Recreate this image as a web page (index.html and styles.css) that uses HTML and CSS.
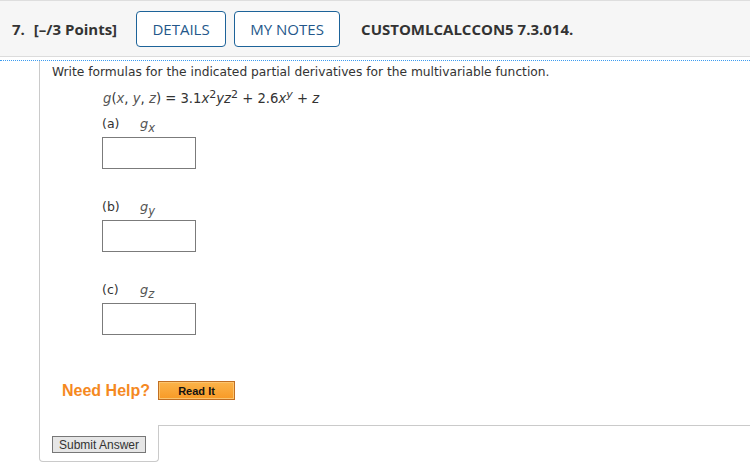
FILE: index.html
```html
<!DOCTYPE html>
<html>
<head>
<meta charset="utf-8">
<link rel="stylesheet" href="styles.css">
</head>
<body>
<header class="qhead">
  <span class="qnum">7.</span>
  <span class="qpts">[–/3 Points]</span>
  <button class="hbtn details">DETAILS</button>
  <button class="hbtn notes">MY NOTES</button>
  <span class="qid">CUSTOMLCALCCON5 7.3.014.</span>
</header>
<div class="main">
  <div class="dots"></div>
  <p class="intro">Write formulas for the indicated partial derivatives for the multivariable function.</p>
  <p class="eq"><i class="v">g</i>(<i class="v">x</i>, <i class="v">y</i>, <i class="v">z</i>) = 3.1<i>x</i><sup>2</sup><i>yz</i><sup>2</sup> + 2.6<i>x</i><sup><i>y</i></sup> + <i>z</i></p>
  <div class="part part-first">
    <div class="plabel"><span class="pl">(a)</span><span class="gv"><i>g</i><sub><i>x</i></sub></span></div>
    <div class="box"></div>
  </div>
  <div class="part">
    <div class="plabel"><span class="pl">(b)</span><span class="gv"><i>g</i><sub><i>y</i></sub></span></div>
    <div class="box"></div>
  </div>
  <div class="part part-last">
    <div class="plabel"><span class="pl">(c)</span><span class="gv"><i>g</i><sub><i>z</i></sub></span></div>
    <div class="box"></div>
  </div>
  <div class="help">
    <span class="need">Need Help?</span>
    <button class="readit">Read It</button>
  </div>
</div>
<div class="foot">
  <div class="foot-left"><button class="submit">Submit Answer</button></div>
  <div class="foot-right"></div>
</div>
</body>
</html>
```
FILE: styles.css
```css
html, body {
  margin: 0;
  padding: 0;
  background: #fff;
}
body {
  width: 750px;
  height: 467px;
  overflow: hidden;
  font-family: "DejaVu Sans", Verdana, sans-serif;
  color: #333;
}
.qhead {
  height: 55px;
  background: #f6f6f6;
  border-top: 1px solid #dedede;
  border-bottom: 1px solid #dcdcdc;
  display: flex;
  align-items: center;
  padding-left: 12px;
  font-family: "Open Sans", sans-serif;
  font-size: 15px;
  box-sizing: content-box;
}
.qnum {
  font-weight: 700;
  color: #333;
  margin-right: 9px;
}
.qpts {
  font-weight: 700;
  color: #333;
  margin-right: 19px;
}
.hbtn {
  height: 36px;
  border: 1px solid #1d6399;
  border-radius: 4px;
  background: #fff;
  color: #24578a;
  font-family: "Open Sans", sans-serif;
  font-size: 15px;
  padding: 0;
  margin: 0 8px 0 0;
}
.details { width: 90px; }
.notes { width: 106px; margin-right: 21px; }
.qid {
  font-weight: 700;
  color: #333;
}
.main {
  margin-left: 39px;
  border-left: 1px solid #cacaca;
  padding: 0 0 25px 12px;
}
.dots {
  margin: 3px 0 0 -52px;
  border-top: 1px dotted #3d9cf0;
}
.intro {
  margin: 3px 0 0;
  font-size: 12.25px;
  line-height: 16px;
}
.eq {
  margin: 11px 0 0 51px;
  font-size: 13.2px;
  line-height: 16px;
  color: #333;
}
.eq i { font-style: italic; }
.eq i.v { color: #555; }
.eq sup {
  font-size: 11px;
  line-height: 0;
  vertical-align: 5px;
}
.part {
  margin-left: 50px;
}
.part-first { margin-top: 9px; }
.plabel {
  font-size: 12.5px;
  line-height: 16px;
  display: flex;
}
.pl {
  width: 38px;
}
.gv {
  color: #555;
  font-size: 13px;
}
.gv sub {
  font-size: 11.5px;
  line-height: 0;
  vertical-align: -4px;
}
.box {
  margin-top: 5px;
  width: 92px;
  height: 30px;
  border: 1px solid #7b7b7b;
  margin-bottom: 30px;
}
.part-last .box { margin-bottom: 46px; }
.help {
  display: flex;
  align-items: center;
  padding-left: 10px;
  height: 19px;
}
.need {
  font-family: "Liberation Sans", Arial, sans-serif;
  font-weight: 700;
  font-size: 16px;
  color: #f5891f;
  margin-right: 8px;
}
.readit {
  width: 77px;
  height: 19px;
  padding: 0;
  border: 1px solid #c16f22;
  background: linear-gradient(#fbb34a, #f89a26);
  box-shadow: inset 0 0 0 1px #fcc46e;
  font-family: "Liberation Sans", Arial, sans-serif;
  font-weight: 700;
  font-size: 11px;
  color: #111;
}
.foot {
  display: flex;
  margin-left: 39px;
}
.foot-left {
  width: 106px;
  border-left: 1px solid #cacaca;
  border-right: 1px solid #cacaca;
  border-bottom: 1px solid #cacaca;
  border-radius: 0 0 4px 4px;
  padding: 11px 0 8px 12px;
}
.foot-right {
  flex: 1;
  border-top: 1px solid #cacaca;
}
.submit {
  display: block;
  width: 94px;
  height: 17px;
  padding: 0;
  border: 1px solid #777;
  background: #e6e6e6;
  font-family: "Liberation Sans", Arial, sans-serif;
  font-size: 12px;
  color: #333;
}
```
